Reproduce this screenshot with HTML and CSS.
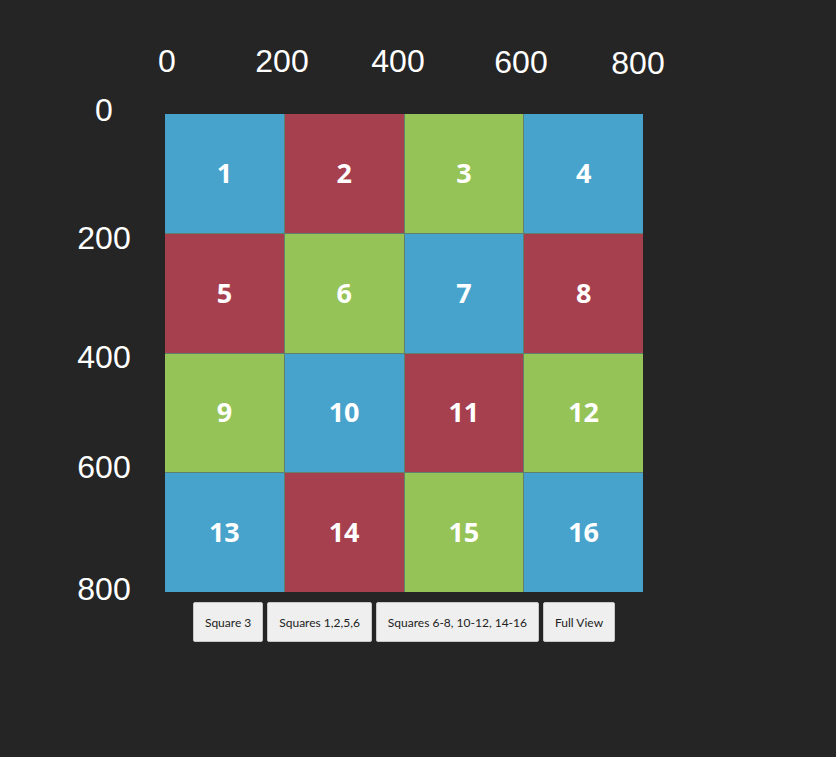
FILE: index.html
```html
<!DOCTYPE html>
<html lang="en">
  <head>
    <meta charset="UTF-8" />
    <meta name="viewport" content="width=device-width, initial-scale=1.0" />
    <title>Grid Zoom</title>
    <link rel="stylesheet" href="styles.css">
  </head>
  <body>
    <div class="chart">
      <!-- axis labels sit on the canvas at their coordinates -->
      <span class="tick top" style="left: 167px; top: 45px;">0</span>
      <span class="tick top" style="left: 282px; top: 45px;">200</span>
      <span class="tick top" style="left: 398px; top: 45px;">400</span>
      <span class="tick top" style="left: 521px; top: 46px;">600</span>
      <span class="tick top" style="left: 638px; top: 47px;">800</span>

      <span class="tick side" style="top: 110px;">0</span>
      <span class="tick side" style="top: 238px;">200</span>
      <span class="tick side" style="top: 357px;">400</span>
      <span class="tick side" style="top: 467px;">600</span>
      <span class="tick side" style="top: 589px;">800</span>

      <div class="board">
        <div class="square blue">1</div>
        <div class="square red">2</div>
        <div class="square green">3</div>
        <div class="square blue">4</div>
        <div class="square red">5</div>
        <div class="square green">6</div>
        <div class="square blue">7</div>
        <div class="square red">8</div>
        <div class="square green">9</div>
        <div class="square blue">10</div>
        <div class="square red">11</div>
        <div class="square green">12</div>
        <div class="square blue">13</div>
        <div class="square red">14</div>
        <div class="square green">15</div>
        <div class="square blue">16</div>
      </div>

      <div class="controls">
        <button class="view-button">Square 3</button>
        <button class="view-button">Squares 1,2,5,6</button>
        <button class="view-button">Squares 6-8, 10-12, 14-16</button>
        <button class="view-button">Full View</button>
      </div>
    </div>
  </body>
</html>
```

FILE: styles.css
```css
* {
  margin: 0;
  padding: 0;
  box-sizing: border-box;
}

body {
  background: #252525;
  min-height: 100vh;
  font-family: "Liberation Sans", Arial, sans-serif;
}

.chart {
  position: relative;
  width: 836px;
  padding: 114px 0 0 165px;
}

.tick {
  position: absolute;
  color: #ffffff;
  font-size: 32px;
  line-height: 1;
  white-space: nowrap;
}

.tick.top {
  transform: translateX(-50%);
}

.tick.side {
  left: 104px;
  transform: translate(-50%, -50%);
}

.board {
  display: grid;
  grid-template-columns: repeat(4, 1fr);
  grid-template-rows: repeat(4, 1fr);
  gap: 1px;
  width: 478px;
  height: 478px;
  background: #60806e;
}

.square {
  display: flex;
  justify-content: center;
  align-items: center;
  padding-bottom: 2px;
  color: #ffffff;
  font-family: "Open Sans", sans-serif;
  font-weight: 700;
  font-size: 27px;
}

.square.blue {
  background: #47a3cb;
}

.square.red {
  background: #a7404e;
}

.square.green {
  background: #96c357;
}

.controls {
  display: flex;
  justify-content: center;
  gap: 4px;
  width: 478px;
  margin-top: 10px;
}

.view-button {
  height: 40px;
  padding: 0 11px;
  background: #efefef;
  border: 1px solid #c8c8c8;
  border-radius: 2px;
  color: #222;
  font-family: Lato, sans-serif;
  font-size: 12px;
}
```
